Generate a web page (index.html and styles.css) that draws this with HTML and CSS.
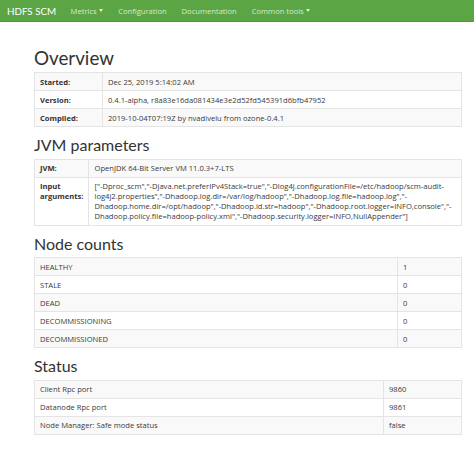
FILE: index.html
```html
<!DOCTYPE html>
<html lang="en">
<head>
<meta charset="utf-8">
<title>HDFS SCM</title>
<link rel="stylesheet" href="styles.css">
</head>
<body>
<nav class="navbar">
  <span class="brand">HDFS SCM</span>
  <ul class="nav">
    <li><a class="nav-link">Metrics <span class="caret"></span></a></li>
    <li><a class="nav-link">Configuration</a></li>
    <li><a class="nav-link">Documentation</a></li>
    <li><a class="nav-link">Common tools <span class="caret"></span></a></li>
  </ul>
</nav>
<main class="container">
  <h1 class="page-title">Overview</h1>
  <table class="table overview">
    <tbody>
      <tr><th>Started:</th><td>Dec 25, 2019 5:14:02 AM</td></tr>
      <tr><th>Version:</th><td>0.4.1-alpha, r8a83e16da081434e3e2d52fd545391d6bfb47952</td></tr>
      <tr><th>Compiled:</th><td>2019-10-04T07:19Z by nvadivelu from ozone-0.4.1</td></tr>
    </tbody>
  </table>

  <h2 class="section-title">JVM parameters</h2>
  <table class="table jvm">
    <tbody>
      <tr><th>JVM:</th><td>OpenJDK 64-Bit Server VM 11.0.3+7-LTS</td></tr>
      <tr><th>Input arguments:</th><td>["-Dproc_scm","-Djava.net.preferIPv4Stack=true","-Dlog4j.configurationFile=/etc/hadoop/scm-audit-log4j2.properties","-Dhadoop.log.dir=/var/log/hadoop","-Dhadoop.log.file=hadoop.log","-Dhadoop.home.dir=/opt/hadoop","-Dhadoop.id.str=hadoop","-Dhadoop.root.logger=INFO,console","-Dhadoop.policy.file=hadoop-policy.xml","-Dhadoop.security.logger=INFO,NullAppender"]</td></tr>
    </tbody>
  </table>

  <h2 class="section-title">Node counts</h2>
  <table class="table nodes">
    <tbody>
      <tr><td>HEALTHY</td><td>1</td></tr>
      <tr><td>STALE</td><td>0</td></tr>
      <tr><td>DEAD</td><td>0</td></tr>
      <tr><td>DECOMMISSIONING</td><td>0</td></tr>
      <tr><td>DECOMMISSIONED</td><td>0</td></tr>
    </tbody>
  </table>

  <h2 class="section-title">Status</h2>
  <table class="table status">
    <tbody>
      <tr><td>Client Rpc port</td><td>9860</td></tr>
      <tr><td>Datanode Rpc port</td><td>9861</td></tr>
      <tr><td>Node Manager: Safe mode status</td><td>false</td></tr>
    </tbody>
  </table>
</main>
</body>
</html>
```

FILE: styles.css
```css
html, body {
  margin: 0;
  padding: 0;
  background: #ffffff;
}

body {
  font-family: "Open Sans", "Liberation Sans", sans-serif;
  font-size: 7.6px;
  color: #3a3a3a;
}

.navbar {
  display: flex;
  align-items: center;
  height: 22px;
  box-sizing: border-box;
  padding-left: 7px;
  background: #5ba544;
  border-bottom: 1px solid #4e973b;
}

.brand {
  font-family: Lato, "Liberation Sans", sans-serif;
  font-size: 9.8px;
  color: #ffffff;
  margin-right: 7px;
}

.nav {
  display: flex;
  list-style: none;
  margin: 0;
  padding: 0;
}

.nav-link {
  display: flex;
  align-items: center;
  padding: 0 7.5px;
  color: #d6ebcf;
  font-size: 7.6px;
}

.caret {
  display: inline-block;
  width: 0;
  height: 0;
  margin-left: 2.5px;
  border-top: 3px solid #e2f1dc;
  border-left: 2.5px solid transparent;
  border-right: 2.5px solid transparent;
}

.container {
  padding-left: 34px;
  width: 428px;
}

.page-title {
  font-family: Lato, "Liberation Sans", sans-serif;
  font-weight: 400;
  font-size: 18.8px;
  line-height: 24px;
  margin: 24px 0 2px;
  color: #333333;
}

.section-title {
  font-family: Lato, "Liberation Sans", sans-serif;
  font-weight: 400;
  font-size: 16px;
  line-height: 20px;
  margin: 8px 0 3.5px;
  color: #333333;
}

.table {
  width: 428px;
  border-collapse: collapse;
  border: 1px solid #e8e8e8;
}

.table th,
.table td {
  padding: 3.5px 5px;
  line-height: 10px;
  border: 1px solid #e4e4e4;
  text-align: left;
  vertical-align: top;
}

.table th {
  font-weight: 700;
  color: #333333;
}

.table tr:nth-child(odd) {
  background: #f9f9f9;
}

.overview th {
  width: 57px;
}

.jvm th {
  width: 33px;
}

.nodes td:last-child {
  width: 53px;
}

.status td:last-child {
  width: 67px;
}
```
